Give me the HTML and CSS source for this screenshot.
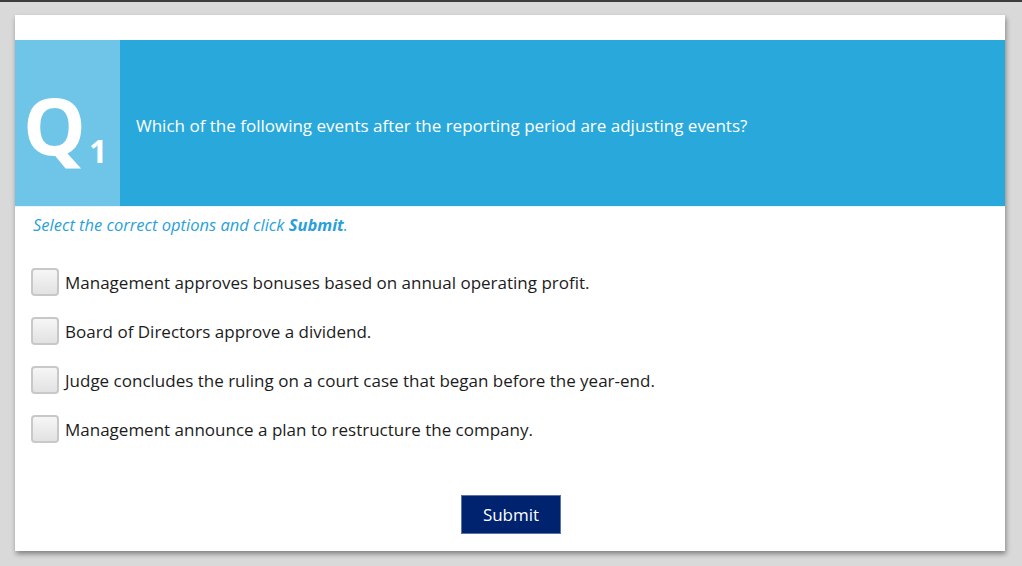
FILE: index.html
```html
<!DOCTYPE html>
<html>
<head>
<meta charset="utf-8">
<link rel="stylesheet" href="styles.css">
</head>
<body>
<div class="topline"></div>
<div class="card">
  <div class="header">
    <div class="qbox"><span class="q">Q</span><span class="num">1</span></div>
    <div class="question">Which of the following events after the reporting period are adjusting events?</div>
  </div>
  <div class="instr">Select the correct options and click <b>Submit</b>.</div>
  <ul class="options">
    <li><span class="cb"></span><span>Management approves bonuses based on annual operating profit.</span></li>
    <li><span class="cb"></span><span>Board of Directors approve a dividend.</span></li>
    <li><span class="cb"></span><span>Judge concludes the ruling on a court case that began before the year-end.</span></li>
    <li><span class="cb"></span><span>Management announce a plan to restructure the company.</span></li>
  </ul>
  <div class="actions"><button class="submit">Submit</button></div>
</div>
</body>
</html>
```
FILE: styles.css
```css
html, body {
  margin: 0;
  padding: 0;
}
body {
  background: #d9d9d9;
  font-family: "Open Sans", "Noto Sans", sans-serif;
  height: 566px;
  overflow: hidden;
}
.topline {
  height: 2px;
  background: #3c3c3c;
}
.card {
  margin: 13px 0 0 15px;
  width: 990px;
  height: 536px;
  background: #fff;
  box-shadow: 1px 3px 5px rgba(0,0,0,0.4);
  display: flex;
  flex-direction: column;
}
.header {
  margin-top: 25px;
  height: 166px;
  display: flex;
  background: #29a9db;
  border-bottom: 1px solid #e6f4fb;
}
.qbox {
  width: 105px;
  height: 166px;
  background: #6fc5e8;
  color: #fff;
  font-weight: 700;
  display: flex;
  align-items: baseline;
  padding: 0 0 0 8px;
  box-sizing: border-box;
  line-height: 1;
}
.q {
  font-size: 79px;
  line-height: 100px;
  position: relative;
  top: 35px;
}
.num {
  font-size: 32px;
  margin-left: 3px;
  position: relative;
  top: 43px;
}
.question {
  flex: 1;
  display: flex;
  align-items: center;
  padding-left: 16px;
  color: #fff;
  font-size: 17px;
  padding-top: 4px;
}
.instr {
  margin: 7px 0 0 18px;
  color: #2a9fd8;
  font-style: italic;
  font-size: 16.5px;
  line-height: 22px;
}
.instr b {
  font-weight: 700;
}
.options {
  list-style: none;
  margin: 32px 0 0 16px;
  padding: 0;
}
.options li {
  display: flex;
  align-items: center;
  height: 28px;
  margin-bottom: 21px;
  color: #1c1c1c;
  font-size: 17px;
}
.cb {
  width: 24px;
  height: 24px;
  border: 2px solid #c8c8c8;
  border-radius: 4px;
  background: linear-gradient(#f6f6f6, #e2e2e2);
  margin-right: 6px;
  flex: none;
}
.actions {
  margin-top: 31px;
  display: flex;
  justify-content: center;
  padding-left: 2px;
}
.submit {
  width: 100px;
  height: 39px;
  background: #00236f;
  border: 1px solid #5a72a8;
  color: #fff;
  font-family: "Open Sans", "Noto Sans", sans-serif;
  font-size: 17px;
  padding: 0;
}
```
